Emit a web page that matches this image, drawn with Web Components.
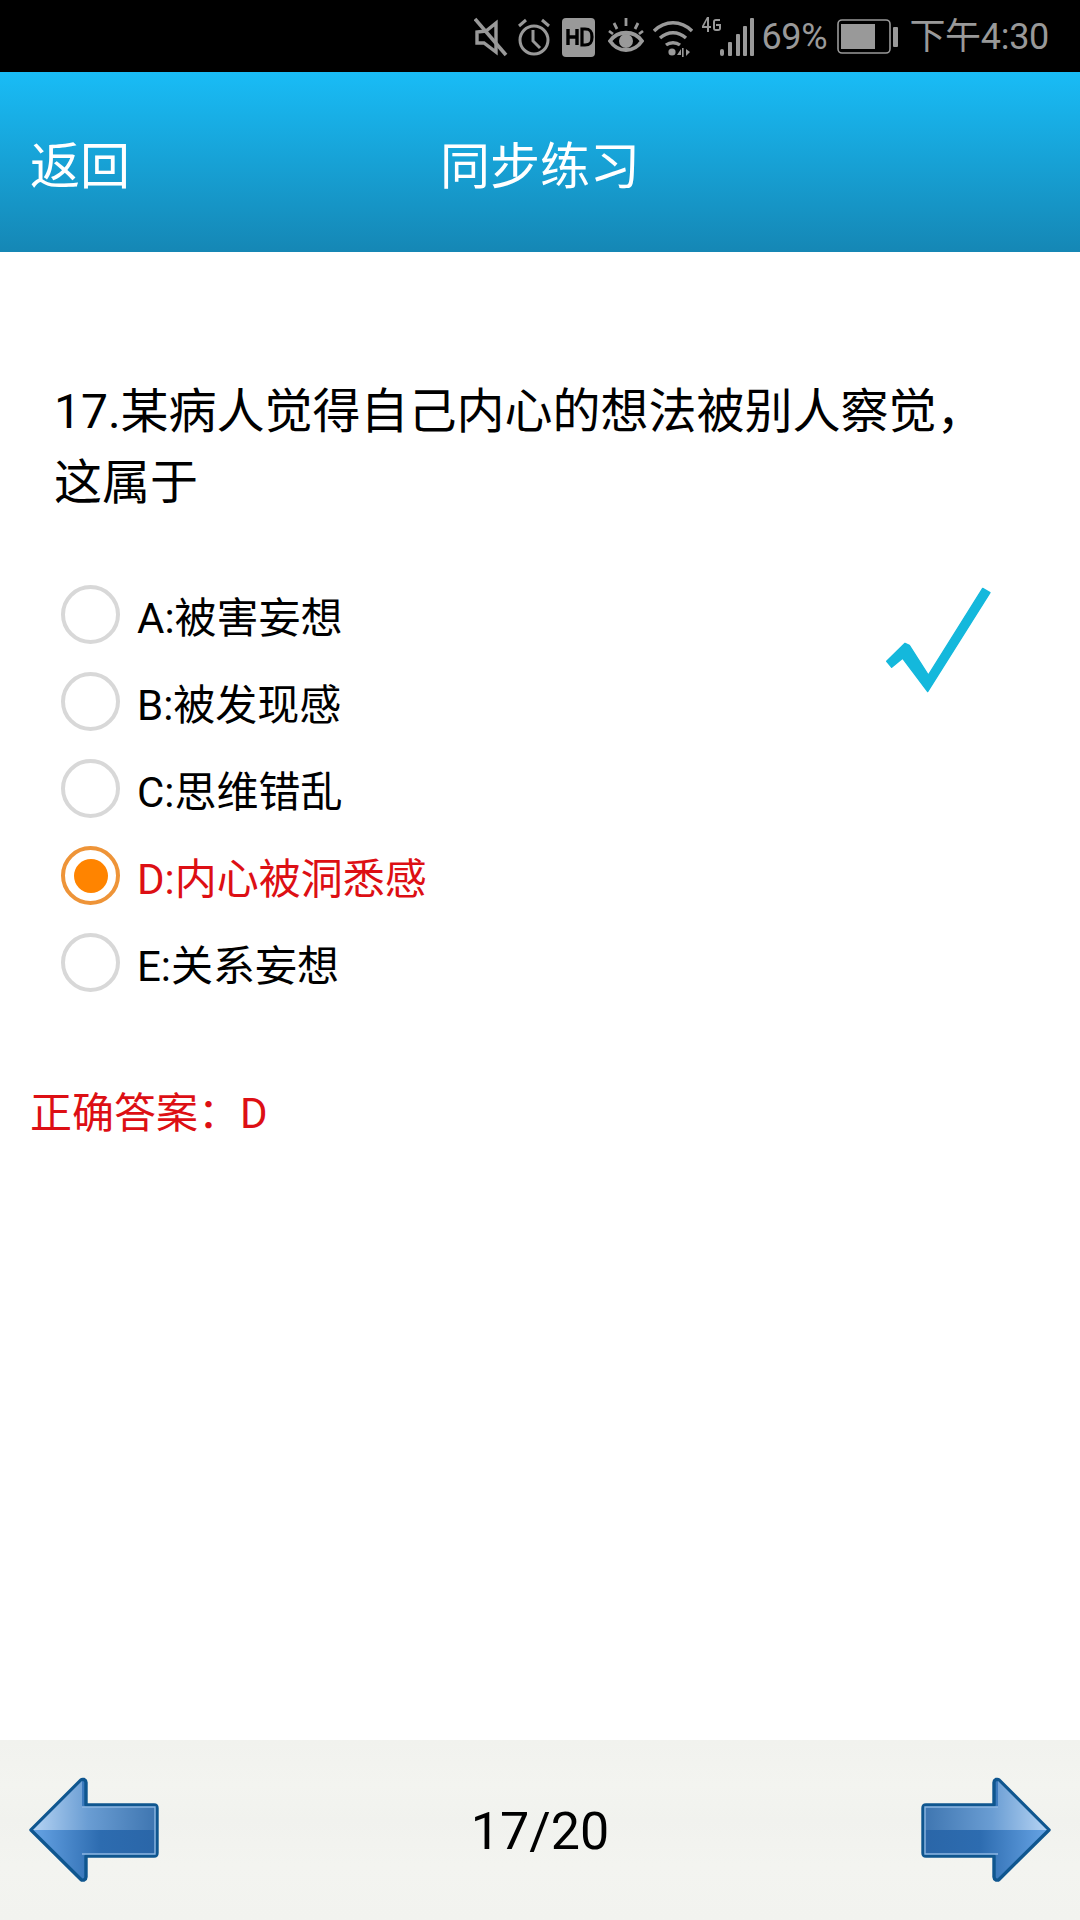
<!DOCTYPE html>
<html lang="zh">
<head>
<meta charset="utf-8">
<title>同步练习</title>
<style>
html, body { margin:0; padding:0; background:#fff; }
body { width:1080px; height:1920px; font-family:Roboto,"Noto Sans CJK SC",sans-serif; }
quiz-page { height:1920px; }
</style>
</head>
<body>
<quiz-page>
   <status-bar></status-bar>
   <top-bar back="返回" heading="同步练习"></top-bar>
   <quiz-question>17.某病人觉得自己内心的想法被别人察觉，这属于</quiz-question>
   <option-list>
      <quiz-option>A:被害妄想</quiz-option>
      <quiz-option>B:被发现感</quiz-option>
      <quiz-option>C:思维错乱</quiz-option>
      <quiz-option selected>D:内心被洞悉感</quiz-option>
      <quiz-option>E:关系妄想</quiz-option>
   </option-list>
   <quiz-answer>正确答案：D</quiz-answer>
   <page-nav slot="nav" current="17/20"></page-nav>
</quiz-page>

<script>
window.customElements.define('quiz-page',
   class extends HTMLElement {
      constructor(){super(); this.attachShadow({mode:'open'});
	 this.shadowRoot.innerHTML = `
<style>
:host { display:flex; flex-direction:column; width:1080px; color:#000; }
main { flex:1; }
</style>
<slot name="top"></slot>
<main><slot></slot></main>
<slot name="nav"></slot>`;
      }
      connectedCallback(){
	 this.querySelector('status-bar').slot = 'top';
	 this.querySelector('top-bar').slot = 'top';
      }
   })

window.customElements.define('status-bar',
   class extends HTMLElement {
      constructor(){super(); this.attachShadow({mode:'open'});
	 this.shadowRoot.innerHTML = `
<style>
:host { display:flex; align-items:center; height:72px; background:#000; color:#999;
   justify-content:flex-end; padding:2px 31px 0 0; box-sizing:border-box; }
svg { display:block; flex:none; }
.txt { font:36px/60px Roboto,"Noto Sans CJK SC",sans-serif; letter-spacing:-.3px; white-space:nowrap; }
.pct { margin-left:7px; }
.clock { margin-left:11px; }
</style>
<svg width="34" height="40" viewBox="0 0 34 40" fill="none" stroke="#999" stroke-width="3.4">
   <path d="M3 15v11h7l12 9V6l-10 8z"/>
   <path d="M1 2l31 36" stroke-width="3.6"/>
</svg>
<svg width="34" height="40" viewBox="0 0 34 40" fill="none" stroke="#999" stroke-width="3" style="margin-left:9px">
   <circle cx="17" cy="23" r="14"/>
   <path d="M16 13v11l7 7M2 9l7-6M32 9l-7-6"/>
</svg>
<svg width="34" height="40" viewBox="0 0 34 40" style="margin-left:11px">
   <rect x="0" y="1" width="33" height="39" rx="4" fill="#999"/>
   <path d="M6 12v16M15 12v16M6 20h9" stroke="#000" stroke-width="3.4" fill="none"/>
   <path d="M20 12v16h3c6 0 7-3 7-8s-1-8-7-8z" stroke="#000" stroke-width="3.2" fill="none"/>
</svg>
<svg width="36" height="40" viewBox="0 0 36 40" fill="none" stroke="#999" stroke-width="3.8" style="margin-left:12px">
   <path d="M2 24c8-11 24-11 32 0-8 12-24 12-32 0z"/>
   <circle cx="18" cy="24" r="7" fill="#999" stroke="none"/>
   <path d="M18 1v8M6 6l3 6M30 6l-3 6M1 14l4 3M35 14l-4 3" stroke-width="2.8"/>
</svg>
<svg width="40" height="42" viewBox="0 0 40 42" fill="none" stroke="#999" stroke-width="3.4" style="margin-left:9px">
   <path d="M1 15c11-11 27-11 38 0M7 22c8-7 18-7 26 0M13 29c4-3 10-3 14 0"/>
   <circle cx="19" cy="36" r="3.6" fill="#999" stroke="none"/>
   <path d="M28 33l-4 6h4zM33 33v7l4-4z" fill="#999" stroke="none"/>
   <rect x="29" y="32" width="1.6" height="9" fill="#999" stroke="none"/>
</svg>
<svg width="53" height="42" viewBox="0 0 53 42" style="margin-left:8px" fill="#999">
   <rect x="19" y="33" width="4" height="7" rx="2"/>
   <rect x="27" y="26" width="4" height="14" rx="1"/>
   <rect x="35" y="18" width="4" height="22" rx="1"/>
   <rect x="42" y="10" width="4" height="30" rx="1"/>
   <rect x="49" y="2" width="4" height="38" rx="1"/>
   <path d="M6 1L1 10v2h5v4h2v-4h2v-2H8V1zM6 4v6H3zM19 3h-4c-2 0-3 1-3 3v6c0 2 1 3 3 3h2c2 0 3-1 3-3V8h-5v2h3v2c0 1 0 1-1 1h-2c-1 0-1 0-1-1V6c0-1 0-1 1-1h4z"/>
</svg>
<span class="txt pct">69%</span>
<svg width="61" height="36" viewBox="0 0 61 36" style="margin-left:10px" fill="none">
   <rect x="1" y="1" width="52" height="33" rx="4" stroke="#999" stroke-width="1.6"/>
   <rect x="4" y="5" width="34" height="25" fill="#999"/>
   <rect x="56" y="8" width="5" height="20" rx="1" fill="#999"/>
</svg>
<span class="txt clock">下午4:30</span>`;
      }
   })

window.customElements.define('top-bar',
   class extends HTMLElement {
      constructor(){super(); this.attachShadow({mode:'open'});
	 this.shadowRoot.innerHTML = `
<style>
:host { display:grid; grid-template-columns:1fr auto 1fr; align-items:center; height:180px;
   background:linear-gradient(#19bcf6,#1587b5); color:#fff; font-size:50px; padding:0 30px; box-sizing:border-box; }
</style>
<span>${this.getAttribute("back")}</span>
<span>${this.getAttribute("heading")}</span>`;
      }
   })

window.customElements.define('quiz-question',
   class extends HTMLElement {
      constructor(){super(); this.attachShadow({mode:'open'});
	 this.shadowRoot.innerHTML = `
<style>
:host { display:block; font-size:48px; line-height:71px; padding:124px 54px 0 54px; }
</style>
<slot></slot>`;
      }
   })

window.customElements.define('option-list',
   class extends HTMLElement {
      constructor(){super(); this.attachShadow({mode:'open'});
	 this.shadowRoot.innerHTML = `
<style>
:host { display:block; position:relative; padding:53px 0 0 61px; }
svg { position:absolute; left:860px; top:52px; }
</style>
<slot></slot>
<svg width="140" height="130" viewBox="0 0 420 390">
   <path d="M80 274L135 220l13 6 57 89L368 55l22 13L203 365 128 265 95 292z" fill="#14b8dc" stroke="#14b8dc" stroke-width="4" stroke-linejoin="round"/>
</svg>`;
      }
   })

window.customElements.define('quiz-option',
   class extends HTMLElement {
      constructor(){super(); this.attachShadow({mode:'open'});
	 this.shadowRoot.innerHTML = `
<style>
:host { display:flex; align-items:center; height:87px; font-size:42px; color:#000; }
:host([selected]) { color:#dd0f14; }
i { flex:none; width:59px; height:59px; box-sizing:border-box; border:4px solid #d8d8d8; border-radius:50%;
   margin-right:17px; display:grid; place-items:center; }
:host([selected]) i { border-color:#ee9438; }
:host([selected]) i::after { content:""; width:34px; height:34px; border-radius:50%; background:#ff8400; }
</style>
<i></i><span><slot></slot></span>`;
      }
   })

window.customElements.define('quiz-answer',
   class extends HTMLElement {
      constructor(){super(); this.attachShadow({mode:'open'});
	 this.shadowRoot.innerHTML = `
<style>
:host { display:block; font-size:42px; line-height:56px; color:#dd0f14; padding:80px 30px 0; }
</style>
<slot></slot>`;
      }
   })

window.customElements.define('page-nav',
   class extends HTMLElement {
      constructor(){super(); this.attachShadow({mode:'open'});
	 const arrow = (id, flip) => `
<svg width="130" height="106" viewBox="0 0 130 106"${flip ? ' style="transform:scaleX(-1)"' : ''}>
   <defs>
      <linearGradient id="${id}" x1="0" x2="1" y1="0" y2="0">
         <stop offset="0" stop-color="#b5d3f3"/><stop offset=".45" stop-color="#6a9dd3"/><stop offset="1" stop-color="#3f76b1"/>
      </linearGradient>
      <linearGradient id="${id}b" x1="0" x2="1" y1="0" y2="0">
         <stop offset="0" stop-color="#68a5e6"/><stop offset=".55" stop-color="#2d6cb0"/><stop offset="1" stop-color="#2a66a8"/>
      </linearGradient>
   </defs>
   <path d="M2 53L52 3q1-1 3-.5 2 1 2 3V28h68q3 0 3 3v45q0 3-3 3H57v21q0 2-2 3-2 .5-3-.5z" fill="url(#${id}b)" stroke="#0f568f" stroke-width="3.4" stroke-linejoin="round"/>
   <path d="M4 53L53 4v26h73v23z" fill="url(#${id})"/>
   <path d="M53 30h73v47H53" fill="none" stroke="#8db7e2" stroke-width="1.4"/>
</svg>`;
	 this.shadowRoot.innerHTML = `
<style>
:host { display:flex; justify-content:space-between; align-items:center; height:180px; box-sizing:border-box;
   padding:0 29px; font-size:52px; color:#000;
   background:linear-gradient(#f1f2ee,#f3f4f0 25%,#f1f2ee 45%,#f3f4f0 70%,#f2f3ef); }
svg { display:block; }
span { position:relative; top:1px; }
</style>
${arrow('l', false)}
<span>${this.getAttribute("current")}</span>
${arrow('r', true)}`;
      }
   })
</script>
</body>
</html>
